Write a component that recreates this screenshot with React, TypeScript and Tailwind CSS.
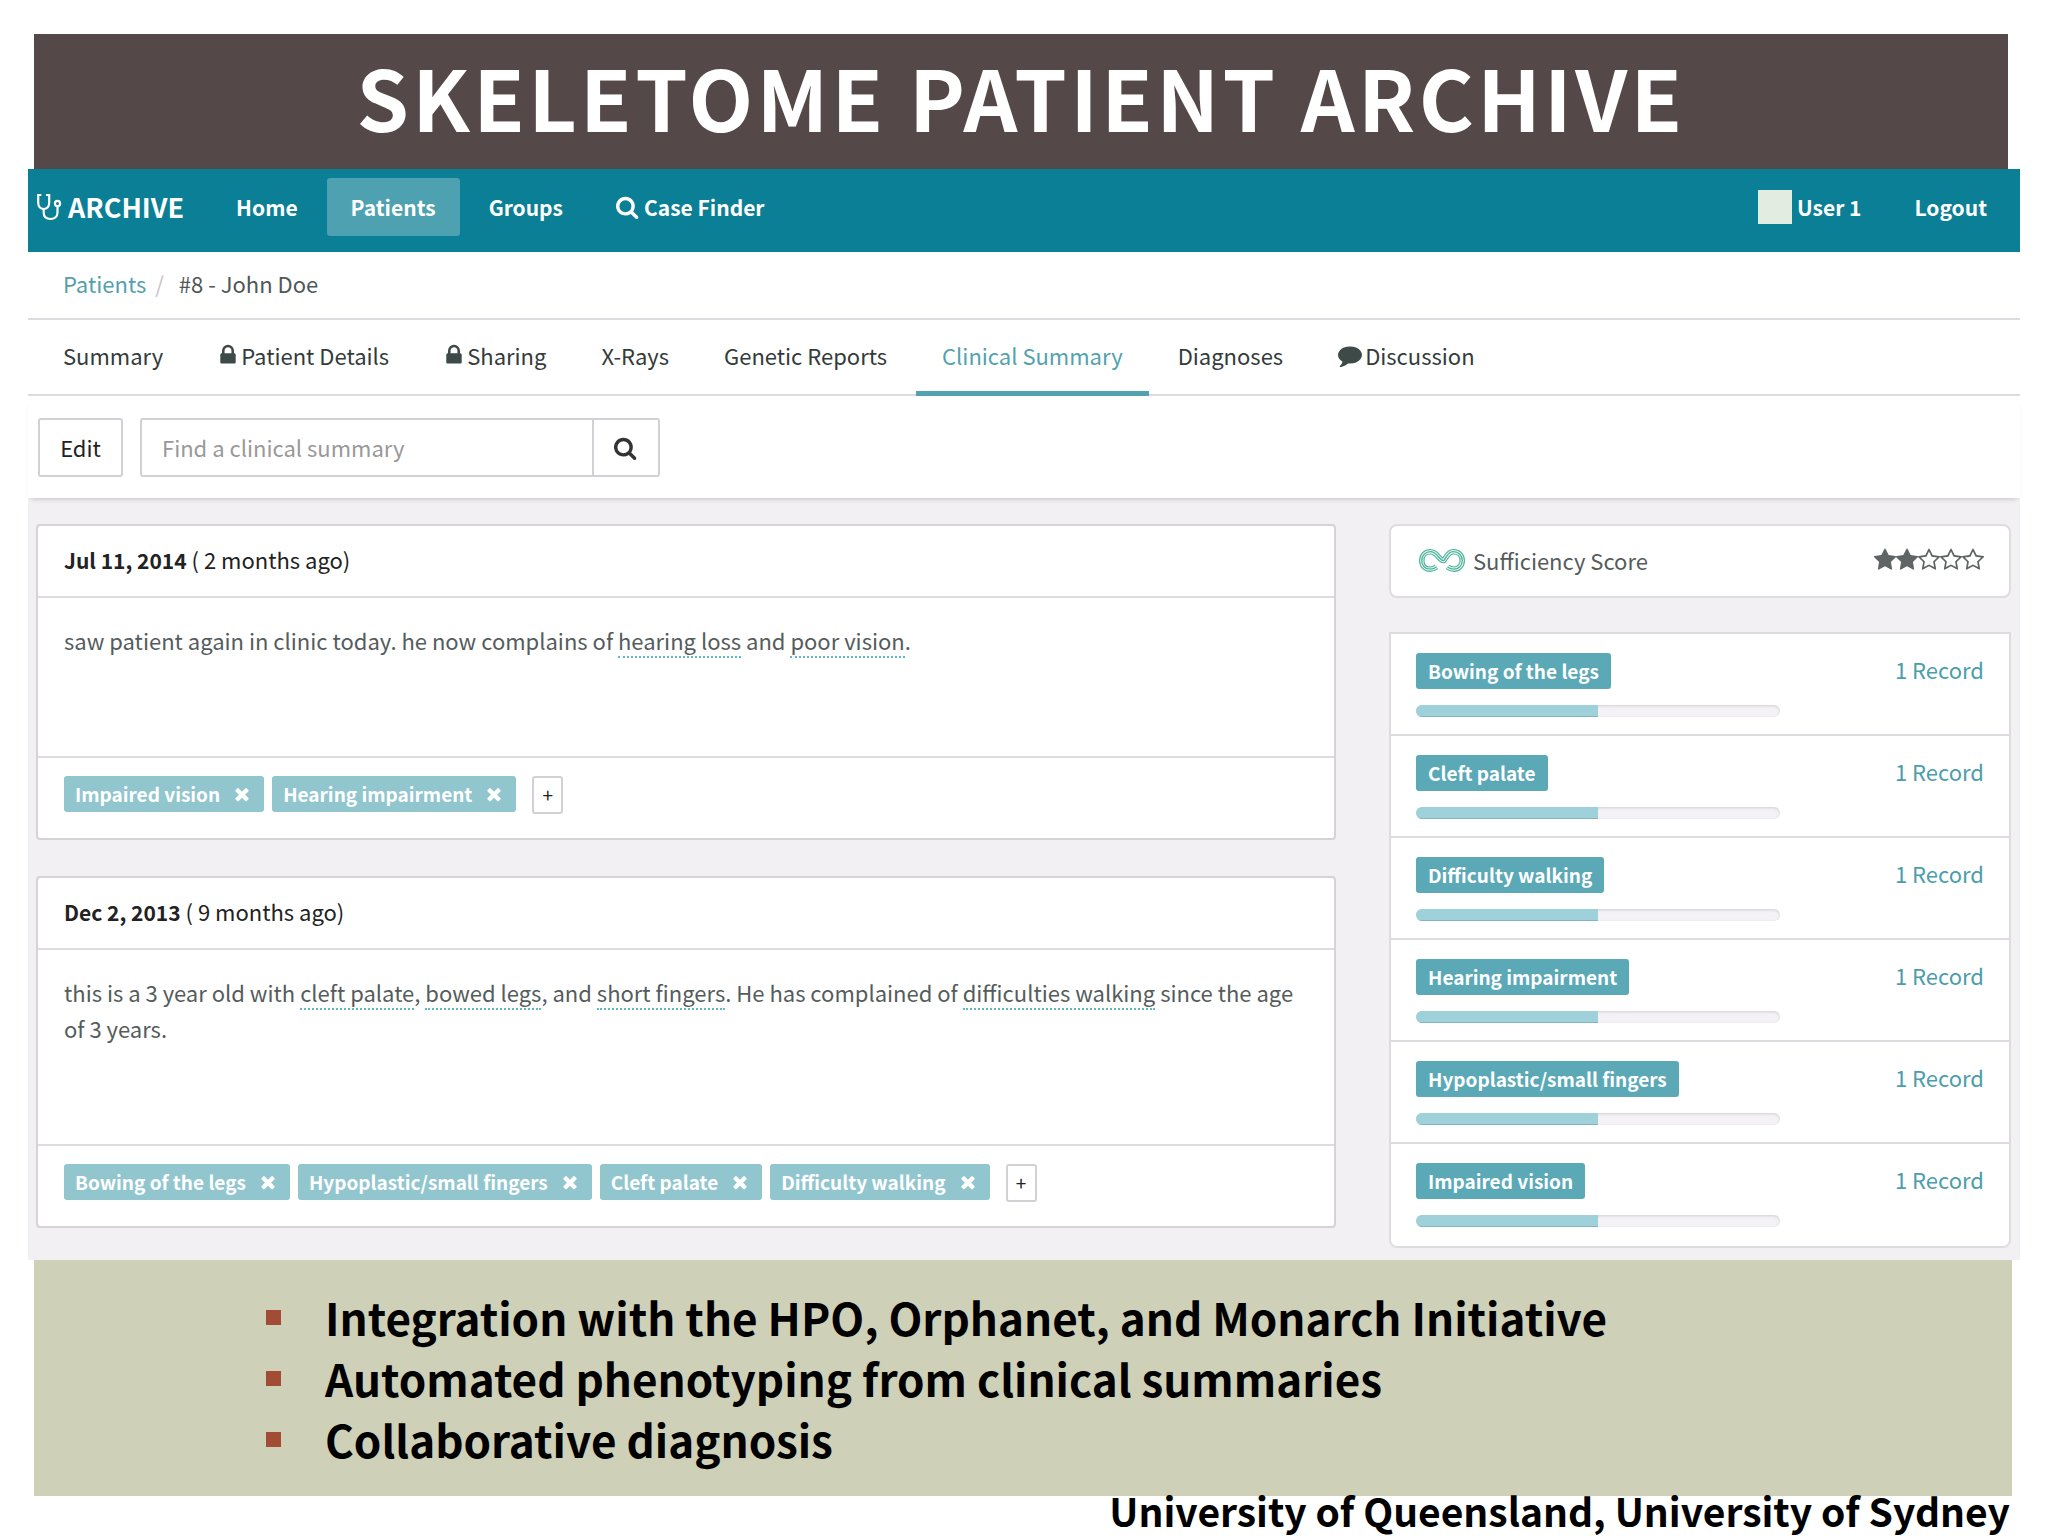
import type { ReactNode } from "react";

const glyphs = {
  search:
    "M1152 832q0-185-131.5-316.5t-316.5-131.5-316.5 131.5-131.5 316.5 131.5 316.5 316.5 131.5 316.5-131.5 131.5-316.5zm512 832q0 52-38 90t-90 38q-54 0-90-38l-343-342q-179 124-399 124-143 0-273.5-55.5t-225-150-150-225-55.5-273.5 55.5-273.5 150-225 225-150 273.5-55.5 273.5 55.5 225 150 150 225 55.5 273.5q0 220-124 399l343 343q37 37 37 90z",
  lock: "M640 768h512v-192q0-106-75-181t-181-75-181 75-75 181v192zm832 96v576q0 40-28 68t-68 28h-960q-40 0-68-28t-28-68v-576q0-40 28-68t68-28h32v-192q0-184 132-316t316-132 316 132 132 316v192h32q40 0 68 28t28 68z",
  comment:
    "M1792 896q0 174-120 321.5t-326 233-450 85.5q-70 0-145-8-198 175-460 242-49 14-114 22-17 2-30.5-9t-17.5-29v-1q-3-4-.5-12t2-10 4.5-9.5l6-9 7-8.5 8-9q7-8 31-34.5t34.5-38 31-39.5 32.5-51 27-59 26-76q-157-89-247.5-220t-90.5-281q0-174 120-321.5t326-233 450-85.5 450 85.5 326 233 120 321.5z",
  star: "M1728 647q0 22-26 48l-363 354 86 500q1 7 1 20 0 21-10.5 35.5t-30.5 14.5q-19 0-40-12l-449-236-449 236q-22 12-40 12-21 0-31.5-14.5t-10.5-35.5q0-6 2-20l86-500-364-354q-25-27-25-48 0-37 56-46l502-73 225-455q19-41 49-41t49 41l225 455 502 73q56 9 56 46z",
  starEmpty:
    "M1201 1004l306-297-422-62-189-382-189 382-422 62 306 297-73 421 378-199 377 199zm527-357q0 22-26 48l-363 354 86 500q1 7 1 20 0 50-41 50-19 0-40-12l-449-236-449 236q-22 12-40 12-21 0-31.5-14.5t-10.5-35.5q0-6 2-20l86-500-364-354q-25-27-25-48 0-37 56-46l502-73 225-455q19-41 49-41t49 41l225 455 502 73q56 9 56 46z",
  times:
    "M1490 1322q0 40-28 68l-136 136q-28 28-68 28t-68-28l-294-294-294 294q-28 28-68 28t-68-28l-136-136q-28-28-28-68t28-68l294-294-294-294q-28-28-28-68t28-68l136-136q28-28 68-28t68 28l294 294 294-294q28-28 68-28t68 28l136 136q28 28 28 68t-28 68l-294 294 294 294q28 28 28 68z",
};

function Icon({ name, className }: { name: keyof typeof glyphs; className: string }) {
  return (
    <svg viewBox="0 0 1792 1792" fill="currentColor" aria-hidden="true" className={className}>
      <path d={glyphs[name]} />
    </svg>
  );
}

function Stethoscope() {
  return (
    <svg viewBox="0 0 26 28" fill="none" stroke="currentColor" strokeWidth="2.2" strokeLinecap="round" aria-hidden="true" className="h-7 w-[26px]">
      <path d="M4.5 2H2.2v7.5c0 4 2.3 6.5 5.5 6.5s5.5-2.5 5.5-6.5V2h-2.3" />
      <path d="M7.7 16v3.5c0 4 2.6 6.5 6.8 6.5s7-2.5 7-6.5V13.5" />
      <circle cx="21.5" cy="10.5" r="2.6" />
    </svg>
  );
}

function Infinity() {
  const loop =
    "M19 22.5C16.5 24.5 14 25 12 25C6.5 25 3 21 3 15.5S7 6 12.5 6C20 6 23 17 27 15.5C30 12 31 6 37.5 6C43 6 47 10 47 15.5S43 25 38 25C35.5 25 33.5 24.5 31 22.5";
  return (
    <svg viewBox="0 0 50 30" fill="none" aria-hidden="true" className="h-7 w-[46px]">
      <path d={loop} stroke="#4bb39a" strokeWidth="6" />
      <path d={loop} stroke="#e9f7f3" strokeWidth="3.6" />
      <path d={loop} stroke="#4bb39a" strokeWidth="1.4" />
    </svg>
  );
}

const navItems = ["Home", "Patients", "Groups", "Case Finder"];

const tabs: { label: string; icon?: "lock" | "comment" }[] = [
  { label: "Summary" },
  { label: "Patient Details", icon: "lock" },
  { label: "Sharing", icon: "lock" },
  { label: "X-Rays" },
  { label: "Genetic Reports" },
  { label: "Clinical Summary" },
  { label: "Diagnoses" },
  { label: "Discussion", icon: "comment" },
];

const phenotypes = [
  "Bowing of the legs",
  "Cleft palate",
  "Difficulty walking",
  "Hearing impairment",
  "Hypoplastic/small fingers",
  "Impaired vision",
];

const points = [
  "Integration with the HPO, Orphanet, and Monarch Initiative",
  "Automated phenotyping from clinical summaries",
  "Collaborative diagnosis",
];

function Term({ children }: { children: ReactNode }) {
  return <span className="border-b-2 border-dotted border-[#62b8c6]">{children}</span>;
}

function SummaryCard({ date, ago, tags, children }: { date: string; ago: string; tags: string[]; children: ReactNode }) {
  return (
    <article className="rounded-sm border-2 border-[#d6d3d8] bg-white">
      <h2 className="flex h-[72px] items-center border-b-2 border-[#dddbdf] px-[26px] pb-1 text-[#222]">
        <span className="whitespace-pre">
          <strong className="text-[21px] font-bold">{date}</strong> ( {ago})
        </span>
      </h2>
      <p className="px-[26px] pt-6 pb-[98px] leading-9 text-[#555c5c]">{children}</p>
      <div className="flex items-start gap-2 border-t-2 border-[#dddbdf] px-[26px] pt-[18px] pb-6">
        {tags.map((tag) => (
          <span key={tag} className="flex h-9 items-center gap-3 rounded-[3px] bg-[#92c6cf] pr-3 pl-[11px] text-[19px] font-bold text-white">
            {tag}
            <button aria-label={`Remove ${tag}`}>
              <Icon name="times" className="size-5" />
            </button>
          </span>
        ))}
        <button aria-label="Add phenotype" className="ml-2 flex h-[38px] w-[31px] items-center justify-center rounded-[3px] border-2 border-[#d3d0d5] bg-white text-[19px] text-[#222]">
          +
        </button>
      </div>
    </article>
  );
}

export default function App() {
  return (
    <div className="min-h-screen bg-white pt-[34px] font-['Noto_Sans_CJK_SC','Noto_Sans',sans-serif] text-[22px] leading-8">
      <header className="mr-10 ml-[34px] flex h-[135px] items-center justify-center bg-[#554849] pb-3">
        <h1 className="text-[84px] font-bold tracking-[0.04em] text-white">SKELETOME PATIENT ARCHIVE</h1>
      </header>

      <div className="mx-7 bg-[#f2f0f3]">
        <nav className="flex items-center bg-[#0a7f96] pt-[9px] pr-[9px] pb-4 pl-2 text-[21px] font-bold text-white">
          <a href="#" className="mr-1 flex items-center gap-[6px] pr-6 text-[27px]">
            <Stethoscope />
            ARCHIVE
          </a>
          <div className="flex gap-[5px]">
            {navItems.map((item) => (
              <a
                key={item}
                href="#"
                className={`flex h-[58px] items-center gap-1 rounded-[3px] px-6 ${item === "Patients" ? "bg-[#4da1b1]" : ""}`}
              >
                {item === "Case Finder" && <Icon name="search" className="size-6" />}
                {item}
              </a>
            ))}
          </div>
          <div className="ml-auto flex items-center gap-[5px]">
            <a href="#" className="flex items-center gap-[5px] px-6">
              <span className="size-[34px] bg-[#e2ece0]" />
              User 1
            </a>
            <a href="#" className="px-6">
              Logout
            </a>
          </div>
        </nav>

        <div className="flex h-[68px] items-center gap-[9px] border-b-2 border-[#dddbdf] bg-white px-[35px] pb-1 text-[#4f5757]">
          <a href="#" className="text-[#539fac]">
            Patients
          </a>
          <span className="text-[#c4c4c4]">/</span>
          <span className="pl-[6px]">#8 - John Doe</span>
        </div>

        <div className="flex h-[76px] gap-[3px] border-b-2 border-[#dddbdf] bg-white pl-[9px] text-[#333b3b]">
          {tabs.map(({ label, icon }) => (
            <a
              key={label}
              href="#"
              className={`-mb-[2px] flex items-center gap-[3px] border-b-5 px-[26px] pt-[2px] pb-1 ${
                label === "Clinical Summary" ? "border-[#52a2b0] text-[#52a2b0]" : "border-transparent"
              }`}
            >
              {icon && <Icon name={icon} className={icon === "lock" ? "-mx-[2px] size-6 text-[#3d4a47]" : "size-6 text-[#3d4a47]"} />}
              {label}
            </a>
          ))}
        </div>

        <div className="relative flex gap-[17px] bg-white px-[10px] pt-[22px] pb-[21px] shadow-[0_4px_5px_-3px_rgba(0,0,0,0.2)]">
          <button className="h-[59px] w-[85px] rounded-[3px] border-2 border-[#d3d0d5] pb-[2px] text-[#222]">Edit</button>
          <form className="flex">
            <input
              aria-label="Find a clinical summary"
              placeholder="Find a clinical summary"
              className="h-[59px] w-[454px] rounded-l-[3px] border-2 border-[#d3d0d5] px-5 pb-[2px] placeholder:text-[#999]"
            />
            <button
              type="button"
              aria-label="Search"
              className="flex h-[59px] w-[66px] items-center justify-center rounded-r-[3px] border-2 border-l-0 border-[#d3d0d5] text-[#333]"
            >
              <Icon name="search" className="size-6" />
            </button>
          </form>
        </div>

        <main className="flex items-start gap-[53px] pt-[26px] pr-[9px] pb-3 pl-2">
          <section className="flex flex-1 flex-col gap-9">
            <SummaryCard date="Jul 11, 2014" ago="2 months ago" tags={["Impaired vision", "Hearing impairment"]}>
              saw patient again in clinic today. he now complains of <Term>hearing loss</Term> and <Term>poor vision</Term>.
            </SummaryCard>
            <SummaryCard
              date="Dec 2, 2013"
              ago="9 months ago"
              tags={["Bowing of the legs", "Hypoplastic/small fingers", "Cleft palate", "Difficulty walking"]}
            >
              this is a 3 year old with <Term>cleft palate</Term>, <Term>bowed legs</Term>, and <Term>short fingers</Term>. He has
              complained of <Term>difficulties walking</Term> since the age of 3 years.
            </SummaryCard>
          </section>

          <aside className="flex w-[622px] flex-col gap-[34px]">
            <div className="flex h-[74px] items-center rounded-lg border-2 border-[#dfdce1] bg-white pr-[25px] pb-[2px] pl-7 text-[#555c5c]">
              <Infinity />
              <span className="pl-2">Sufficiency Score</span>
              <span role="img" aria-label="2 of 5 stars" className="ml-auto flex text-[#5f6565]">
                {[1, 2, 3, 4, 5].map((n) => (
                  <Icon key={n} name={n <= 2 ? "star" : "starEmpty"} className="-mx-px size-6" />
                ))}
              </span>
            </div>

            <ul className="rounded-b-lg border-2 border-[#dfdce1] bg-white">
              {phenotypes.map((name) => (
                <li key={name} className="flex h-[102px] flex-col gap-4 border-b-2 border-[#dfdce1] px-[25px] pt-[19px] last:border-b-0">
                  <div className="flex items-start justify-between">
                    <span className="flex h-9 items-center rounded-[3px] bg-[#5ba9b7] px-3 text-[19px] font-bold text-white">{name}</span>
                    <a href="#" className="text-[#4c9dab]">
                      1 Record
                    </a>
                  </div>
                  <div className="h-3 w-[64%] overflow-hidden rounded-md bg-[#f4f2f6] shadow-[inset_0_1px_3px_rgba(0,0,0,0.15)]">
                    <div className="h-full w-1/2 border-b border-[#84b5be] bg-[#9ed1da]" />
                  </div>
                </li>
              ))}
            </ul>
          </aside>
        </main>
      </div>

      <div className="pb-3 font-bold text-black">
        <ul className="mr-9 ml-[34px] bg-[#cfd0b8] pt-[27px] pb-[26px] pl-[232px] text-[44px] leading-[61px]">
          {points.map((point) => (
            <li key={point} className="flex items-center gap-11">
              <span className="size-[15px] bg-[#a24b35]" />
              {point}
            </li>
          ))}
        </ul>
        <p className="mr-[38px] text-right text-[39px] leading-7">University of Queensland, University of Sydney</p>
      </div>
    </div>
  );
}
